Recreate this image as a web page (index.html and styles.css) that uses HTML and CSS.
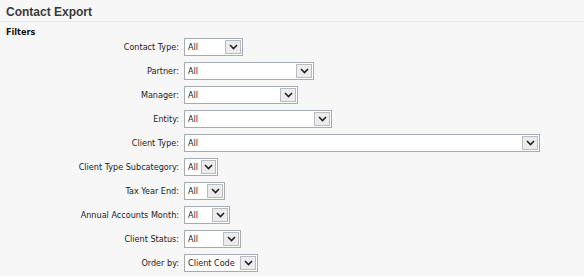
FILE: index.html
```html
<!DOCTYPE html>
<html lang="en">
<head>
	<meta charset="UTF-8">
	<title>Contact Export</title>
	<link rel="stylesheet" href="styles.css">
</head>
<body>
	<div class="page-header">Contact Export</div>
	<div class="section-title">Filters</div>
	<div class="filters">
		<label>Contact Type:</label>
		<div class="select w-contact"><span class="value">All</span><span class="arrow"><svg width="9" height="6" viewBox="0 0 9 6"><path d="M1 1l3.5 3.5L8 1" fill="none" stroke="#222" stroke-width="1.6"/></svg></span></div>

		<label>Partner:</label>
		<div class="select w-partner"><span class="value">All</span><span class="arrow"><svg width="9" height="6" viewBox="0 0 9 6"><path d="M1 1l3.5 3.5L8 1" fill="none" stroke="#222" stroke-width="1.6"/></svg></span></div>

		<label>Manager:</label>
		<div class="select w-manager"><span class="value">All</span><span class="arrow"><svg width="9" height="6" viewBox="0 0 9 6"><path d="M1 1l3.5 3.5L8 1" fill="none" stroke="#222" stroke-width="1.6"/></svg></span></div>

		<label>Entity:</label>
		<div class="select w-entity"><span class="value">All</span><span class="arrow"><svg width="9" height="6" viewBox="0 0 9 6"><path d="M1 1l3.5 3.5L8 1" fill="none" stroke="#222" stroke-width="1.6"/></svg></span></div>

		<label>Client Type:</label>
		<div class="select w-clienttype"><span class="value">All</span><span class="arrow"><svg width="9" height="6" viewBox="0 0 9 6"><path d="M1 1l3.5 3.5L8 1" fill="none" stroke="#222" stroke-width="1.6"/></svg></span></div>

		<label>Client Type Subcategory:</label>
		<div class="select w-subcat"><span class="value">All</span><span class="arrow"><svg width="9" height="6" viewBox="0 0 9 6"><path d="M1 1l3.5 3.5L8 1" fill="none" stroke="#222" stroke-width="1.6"/></svg></span></div>

		<label>Tax Year End:</label>
		<div class="select w-taxyear"><span class="value">All</span><span class="arrow"><svg width="9" height="6" viewBox="0 0 9 6"><path d="M1 1l3.5 3.5L8 1" fill="none" stroke="#222" stroke-width="1.6"/></svg></span></div>

		<label>Annual Accounts Month:</label>
		<div class="select w-annual"><span class="value">All</span><span class="arrow"><svg width="9" height="6" viewBox="0 0 9 6"><path d="M1 1l3.5 3.5L8 1" fill="none" stroke="#222" stroke-width="1.6"/></svg></span></div>

		<label>Client Status:</label>
		<div class="select w-status"><span class="value">All</span><span class="arrow"><svg width="9" height="6" viewBox="0 0 9 6"><path d="M1 1l3.5 3.5L8 1" fill="none" stroke="#222" stroke-width="1.6"/></svg></span></div>

		<label>Order by:</label>
		<div class="select w-order"><span class="value">Client Code</span><span class="arrow"><svg width="9" height="6" viewBox="0 0 9 6"><path d="M1 1l3.5 3.5L8 1" fill="none" stroke="#222" stroke-width="1.6"/></svg></span></div>
	</div>
</body>
</html>
```

FILE: styles.css
```css
/* reset */
* {
	margin: 0;
	padding: 0;
	box-sizing: border-box;
}
body {
	font-family: "DejaVu Sans Condensed", "DejaVu Sans", sans-serif;
	font-size: 9px;
	color: #222;
	background: #f7f7f7;
}
.page-header {
	padding: 5px 6px 2px;
	line-height: 14px;
	font-family: "Liberation Sans", Arial, sans-serif;
	font-weight: bold;
	font-size: 12px;
	color: #3a3a3a;
	border-bottom: 1px solid #e8e8e8;
}
.section-title {
	padding: 4px 6px 0;
	line-height: 12px;
	font-weight: bold;
	font-size: 9px;
	color: #111;
}
.filters {
	display: grid;
	grid-template-columns: 184px auto;
	justify-content: start;
	justify-items: start;
	align-items: center;
	row-gap: 6px;
}
.filters label {
	justify-self: end;
	padding-right: 5px;
	color: #222;
}
.select {
	display: flex;
	align-items: center;
	height: 18px;
	border: 1px solid #a4abb3;
	background: white;
	padding: 1px;
	white-space: nowrap;
}
.select .value {
	flex: 1;
	padding: 0 3px 0 2px;
	line-height: 14px;
}
.select .arrow {
	display: flex;
	align-items: center;
	justify-content: center;
	width: 16px;
	height: 14px;
	background: #ececec;
	border: 1px solid #b8bcc2;
}
.w-contact { width: 59px; }
.w-partner { width: 130px; }
.w-manager { width: 114px; }
.w-entity { width: 148px; }
.w-clienttype { width: 356px; }
.w-subcat { width: 34px; }
.w-taxyear { width: 41px; }
.w-annual { width: 46px; }
.w-status { width: 57px; }
.w-order { width: 74px; }
```
